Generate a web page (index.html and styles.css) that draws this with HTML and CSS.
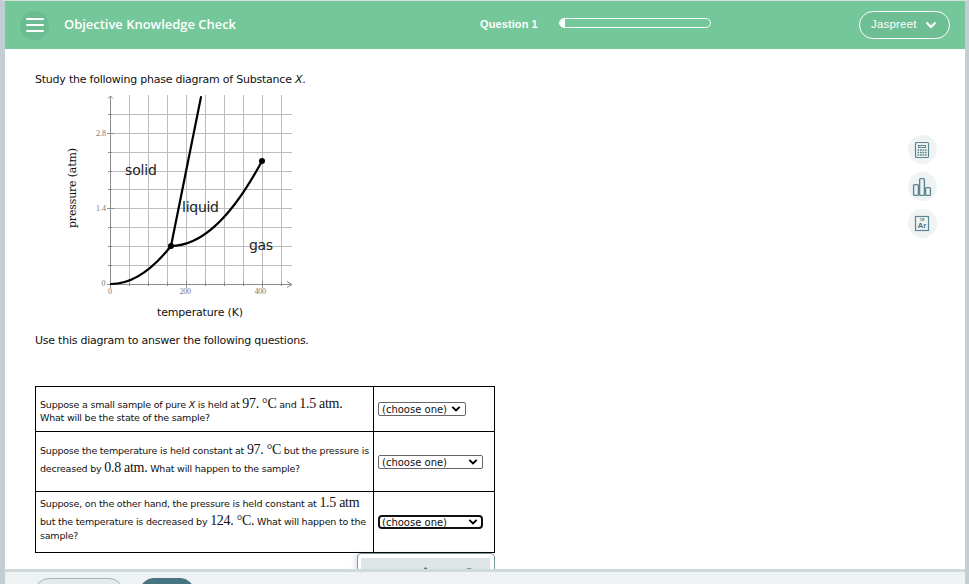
FILE: index.html
```html
<!DOCTYPE html>
<html lang="en">
<head>
<meta charset="utf-8">
<title>Objective Knowledge Check</title>
<link rel="stylesheet" href="styles.css">
</head>
<body>
<div class="app">
  <header class="topbar">
    <button class="menu" aria-label="Menu"><i></i><i></i><i></i></button>
    <h1 class="title">Objective Knowledge Check</h1>
    <span class="question">Question 1</span>
    <div class="progress"><div class="progress-fill"></div></div>
    <button class="user"><span>Jaspreet</span>
      <svg width="12" height="8" viewBox="0 0 12 8"><path d="M1.500 1.500 6 6l4.500-4.500" fill="none" stroke="#fff" stroke-width="2"/></svg>
    </button>
  </header>
  <div class="body">
    <main class="content">
      <p class="intro">Study the following phase diagram of Substance <em>X</em>.</p>
      <svg class="diagram" width="270" height="235" viewBox="35 90 270 235">
        <g stroke="#bdbdbd" fill="none">
          <path d="M129.500 95V284M148.500 95V284M167.500 95V284M186.500 95V284M205.500 95V284M224.500 95V284M243.500 95V284M262.500 95V284M281.500 95V284"/>
          <path d="M110 114.500H292M110 133.500H292M110 152.500H292M110 171.500H292M110 189.500H292M110 208.500H292M110 227.500H292M110 246.500H292M110 265.500H292"/>
        </g>
        <g stroke="#8c8c8c" fill="none">
          <path d="M110.500 96V285M110 284.500H292M108 98.500l2.500-2.500 2.500 2.500M287 281.500l5 3-5 3"/>
          <path d="M108 114.500h4M107 133.500h7M108 152.500h4M108 171.500h4M108 189.500h4M107 208.500h7M108 227.500h4M108 246.500h4M108 265.500h4M107 284.500h4"/>
          <path d="M110.500 284v4M129.500 282v4M148.500 282v4M167.500 282v4M186.500 281v7M205.500 282v4M224.500 282v4M243.500 282v4M262.500 281v7M281.500 282v4"/>
        </g>
        <g fill="none" stroke="#000" stroke-width="2.200" stroke-linecap="round">
          <path d="M111 284Q141 284 171 246"/>
          <path d="M171 246Q216.500 246 262 161"/>
          <path d="M171 246 201 97"/>
        </g>
        <circle cx="171" cy="246" r="3"/><circle cx="262" cy="161" r="3"/>
        <g class="tick">
          <text x="96" y="136" textLength="10">2.8</text>
          <text x="96" y="211" textLength="10">1.4</text>
          <text x="101.500" y="286">0</text>
          <text x="108" y="294">0</text>
          <text x="179.500" y="294" textLength="11.500">200</text>
          <text x="254.500" y="294" textLength="11.500">400</text>
        </g>
        <g class="phase">
          <text x="125" y="175" textLength="32">solid</text>
          <text x="182" y="212" textLength="37">liquid</text>
          <text x="249" y="250" textLength="24">gas</text>
        </g>
        <g class="axis">
          <text x="157" y="316" textLength="86">temperature (K)</text>
          <text class="pressure" transform="translate(75.500 228) rotate(-90)" textLength="80">pressure (atm)</text>
        </g>
      </svg>
      <p class="use">Use this diagram to answer the following questions.</p>
      <div class="table">
        <div class="cell q1"><p>Suppose a small sample of pure <em>X</em> is held at <b>97. °C</b> and <b>1.5 atm.</b></p><p>What will be the state of the sample?</p></div>
        <div class="cell"><button class="select narrow"><span>(choose one)</span><svg width="10" height="6" viewBox="0 0 9 6"><path d="M.8.8 4.500 4.500 8.200.8" fill="none" stroke="#000" stroke-width="1.900"/></svg></button></div>
        <div class="cell q2"><p>Suppose the temperature is held constant at <b>97. °C</b> but the pressure is</p><p>decreased by <b>0.8 atm.</b> What will happen to the sample?</p></div>
        <div class="cell"><button class="select"><span>(choose one)</span><svg width="10" height="6" viewBox="0 0 9 6"><path d="M.8.8 4.500 4.500 8.200.8" fill="none" stroke="#000" stroke-width="1.900"/></svg></button></div>
        <div class="cell q3"><p>Suppose, on the other hand, the pressure is held constant at <b>1.5 atm</b></p><p>but the temperature is decreased by <b>124. °C.</b> What will happen to the</p><p>sample?</p></div>
        <div class="cell"><button class="select active"><span>(choose one)</span><svg width="10" height="6" viewBox="0 0 9 6"><path d="M.8.8 4.500 4.500 8.200.8" fill="none" stroke="#000" stroke-width="1.900"/></svg></button></div>
      </div>
      <div class="panel"><div class="panel-tools">
        <svg width="60" height="12" viewBox="0 0 60 12" fill="none" stroke="#477985" stroke-width="1.500"><path d="M5.500 12l2-2 2 2"/><path d="M47 12.500a5 4 0 0 1 8 0"/></svg>
      </div></div>
    </main>
    <aside class="tools">
      <button aria-label="Calculator"><svg width="16" height="18" viewBox="0 0 16 18" fill="none" stroke="#5c858f"><rect x="1.500" y="1.500" width="13" height="15" rx="1" stroke-width="1.200"/><rect x="4.500" y="4.500" width="7" height="2"/><path d="M3.500 9h9M3.500 11.500h9M3.500 14h9" stroke-width="1.600" stroke-dasharray="1.700 .8"/></svg></button>
      <button aria-label="Statistics"><svg width="20" height="20" viewBox="0 0 20 20" fill="none" stroke="#5c858f" stroke-width="1.400"><rect x="1.600" y="7.600" width="4.800" height="10.800" rx="1"/><rect x="7.600" y="1.600" width="4.800" height="16.800" rx="1"/><rect x="13.600" y="10.600" width="4.800" height="7.800" rx="1"/></svg></button>
      <button aria-label="Periodic table"><svg width="16" height="17" viewBox="0 0 16 17"><rect x="1.500" y="1.500" width="13" height="14" fill="none" stroke="#5c858f" stroke-width="1.200"/><text x="8" y="6" class="number">18</text><text x="8" y="13.300" class="element">Ar</text></svg></button>
    </aside>
  </div>
  <footer class="footer"><button class="pill"></button><button class="pill primary"></button></footer>
</div>
</body>
</html>
```
FILE: styles.css
```css
* { box-sizing: border-box; }
body { margin: 0; font-family: "DejaVu Sans", Verdana, sans-serif; color: #111; }
button { padding: 0; margin: 0; border: 0; background: none; font: inherit; color: inherit; }
p { margin: 0; white-space: nowrap; }
svg { display: block; flex: none; }
.app { width: 969px; height: 584px; overflow: hidden; border: solid #c1cfd5; border-width: 1px 4px 0 5px; border-top-color: #d8dfdf; display: flex; flex-direction: column; background: #fff; }
.topbar { flex: none; height: 48px; background: #74c799; color: #fff; display: flex; align-items: center; padding: 0 15px; }
.menu { width: 29px; height: 29px; border-radius: 50%; background: #6bbd91; display: flex; flex-direction: column; align-items: center; justify-content: center; gap: 4px; }
.menu i { width: 18px; height: 2px; background: #fff; border-radius: 1px; }
.title { margin: -2px 0 0 15px; width: 416px; font: 600 13px "Open Sans", sans-serif; letter-spacing: -.03px; white-space: nowrap; }
.question { width: 79px; margin-top: -2px; font: bold 11px "Liberation Sans", Arial, sans-serif; letter-spacing: .1px; white-space: nowrap; }
.progress { width: 152px; height: 10px; margin-top: -4px; border: 1px solid #fff; border-radius: 5px; overflow: hidden; }
.progress-fill { width: 5px; height: 100%; background: #fff; }
.user { margin-left: auto; width: 91px; height: 28px; border: 1px solid #fff; border-radius: 14px; background: #6dbe92; display: flex; align-items: center; justify-content: space-between; padding: 0 12px 0 11px; font-size: 11.500px; font-family: "Liberation Sans", Arial, sans-serif; letter-spacing: .2px; }
.user span { margin-top: -2px; }
.body { flex: 1; min-height: 0; display: flex; justify-content: space-between; overflow: hidden; }
.content { width: 490px; padding: 24px 0 0 30px; }
.intro, .use { font-size: 11px; line-height: 14px; }
.intro { letter-spacing: -.23px; }
em { font-style: italic; }
.diagram { margin-top: 3px; }
.tick { font: 8px "Liberation Serif", serif; fill: #777; }
.phase { font: 14px "DejaVu Sans", sans-serif; fill: #222; }
.axis { font: 11px "DejaVu Sans", sans-serif; fill: #111; }
.pressure { font-family: "DejaVu Serif", serif; }
.use { margin-top: 9px; letter-spacing: -.24px; }
.table { margin-top: 38px; width: 460px; border: 1px solid #000; border-width: 1px 0 0 1px; display: grid; grid-template-columns: 338px 121px; grid-template-rows: 45px 60px 61px; font-size: 9.500px; letter-spacing: -.21px; }
.cell { border: solid #000; border-width: 0 1px 1px 0; padding-left: 4px; display: flex; flex-direction: column; justify-content: center; }
.cell b { font: 14px/13px "Liberation Serif", serif; letter-spacing: -.3px; }
.q1 { padding-top: 2px; }
.q1 p { line-height: 13px; }
.q2 { padding-bottom: 3px; }
.q2 p { line-height: 18px; }
.q3 { padding-bottom: 9px; }
.q3 p { line-height: 18px; }
.q3 p:last-child { line-height: 9px; }
.select { width: 105px; height: 14px; border: 1px solid #666; border-radius: 2px; display: flex; align-items: center; justify-content: space-between; padding: 0 4px 0 3px; font-size: 10px; line-height: 12px; letter-spacing: 0; background: #fff; }
.select span { margin-top: 2px; }
.select.narrow { width: 88px; }
.select.active { border: 2px solid #111; border-radius: 4px; padding: 0 3px 0 2px; }
.panel { margin-left: 322px; width: 138px; height: 40px; border: 1px solid #7b9ba3; border-radius: 4px; padding: 4px 4px 0 3px; box-shadow: -3px 0 4px #e5eaeb; }
.panel-tools { height: 35px; background: #dfe6e8; padding-left: 57px; }
.tools { width: 29px; margin: 86px 28px 0 0; display: flex; flex-direction: column; gap: 8px; }
.tools button { width: 29px; height: 29px; border-radius: 50%; background: #eff3f4; display: flex; align-items: center; justify-content: center; padding-right: 2px; }
.number { font: bold 4px "Liberation Sans", sans-serif; fill: #477985; text-anchor: middle; }
.element { font: bold 8px "Liberation Sans", sans-serif; fill: #477985; text-anchor: middle; }
.footer { flex: none; height: 15px; border-top: 3px solid #cfdbdb; background: #eef2f3; padding: 6px 0 0 29px; display: flex; gap: 15px; }
.pill { width: 90px; height: 30px; flex: none; border: 1px solid #9fb7be; border-radius: 15px; background: #e5eaed; }
.pill.primary { width: 56px; background: #477481; border-color: #477481; }
```
